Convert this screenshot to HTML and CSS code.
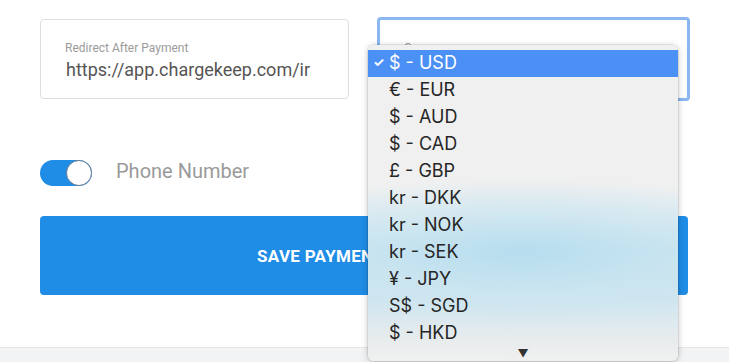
FILE: index.html
```html
<!DOCTYPE html>
<html lang="en">
<head>
    <meta charset="UTF-8">
    <meta name="viewport" content="width=device-width, initial-scale=1.0">
    <title>Payment Settings</title>
    <link rel="stylesheet" href="styles.css">
</head>
<body>
    <div class="page">
        <div class="form">
            <div class="field-row">
                <div class="field">
                    <label class="field-label">Redirect After Payment</label>
                    <div class="field-value">https://app.chargekeep.com/ir</div>
                </div>
                <div class="field field-focus">
                    <label class="field-label">Currency</label>
                    <div class="field-value"></div>
                </div>
            </div>

            <div class="toggle-row">
                <span class="toggle"><span class="knob"></span></span>
                <span class="toggle-label">Phone Number</span>
            </div>

            <button type="button" class="save-btn">SAVE PAYMENT SETTINGS</button>
        </div>
        <div class="footer"></div>
    </div>

    <!-- native select popup, drawn over the form -->
    <ul class="menu">
        <li class="selected"><span class="check">✓</span>$ - USD</li>
        <li>€ - EUR</li>
        <li>$ - AUD</li>
        <li>$ - CAD</li>
        <li>£ - GBP</li>
        <li>kr - DKK</li>
        <li>kr - NOK</li>
        <li>kr - SEK</li>
        <li>¥ - JPY</li>
        <li>S$ - SGD</li>
        <li>$ - HKD</li>
        <li class="more">▼</li>
    </ul>
</body>
</html>
```

FILE: styles.css
```css
* {
    box-sizing: border-box;
}

body {
    margin: 0;
    font-family: Roboto, "Helvetica Neue", Arial, sans-serif;
    background-color: white;
    overflow: hidden;
}

.page {
    height: 362px;
    display: flex;
    flex-direction: column;
}

.form {
    padding: 19px 41px 0 40px;
    height: 347px;
}

.field-row {
    display: grid;
    grid-template-columns: 1fr 1fr;
    gap: 30px;
}

.field {
    height: 80px;
    border: 1px solid #dedede;
    border-radius: 4px;
    padding: 21px 24px 0 24px;
    background-color: white;
    overflow: hidden;
}

.field-focus {
    border-color: #8ab6f2;
    box-shadow: 0 0 0 2px #8ab6f2;
    border-radius: 2px;
}

.field-label {
    display: block;
    font-size: 12px;
    color: #9b9b9b;
    line-height: 14px;
}

.field-value {
    font-size: 18px;
    color: #555;
    line-height: 26px;
    margin-top: 2px;
    white-space: nowrap;
    padding-left: 1px;
}

.toggle-row {
    display: flex;
    align-items: center;
    gap: 24px;
    margin-top: 61px;
    height: 26px;
}

.toggle {
    width: 52px;
    height: 26px;
    border-radius: 13px;
    background-color: #1f8ce6;
    display: flex;
    justify-content: flex-end;
}

.knob {
    width: 26px;
    height: 26px;
    border-radius: 50%;
    background-color: white;
    border: 1px solid #6b7d92;
}

.toggle-label {
    font-size: 20px;
    color: #9a9a9a;
    margin-top: -5px;
}

.save-btn {
    display: block;
    width: 100%;
    height: 79px;
    margin-top: 30px;
    border: none;
    border-radius: 4px;
    background-color: #1f8ce6;
    color: white;
    font-family: Roboto, Arial, sans-serif;
    font-size: 17px;
    font-weight: 700;
    letter-spacing: 0.3px;
}

.footer {
    flex: 1;
    background-color: #f2f3f5;
    border-top: 1px solid #e6e6e6;
}

.menu {
    position: absolute;
    left: 368px;
    top: 45px;
    width: 310px;
    height: 316px;
    margin: 0;
    padding: 5px 0 0 0;
    list-style: none;
    border-radius: 6px;
    background:
        radial-gradient(ellipse 280px 75px at 50% 207px, rgba(180, 220, 238, 0.85), rgba(200, 228, 240, 0.5) 55%, rgba(240, 240, 240, 0) 100%),
        linear-gradient(#f0f0f0 0, #f0f0f0 140px, #dcebf1 175px, #c8e4f0 205px, #d0e6f0 255px, #e8eced 295px, #f0f0f0 316px);
    box-shadow: 0 1px 6px rgba(0, 0, 0, 0.25), 0 0 0 0.5px rgba(0, 0, 0, 0.12);
    font-family: Inter, Roboto, Arial, sans-serif;
    font-size: 18px;
    color: #262626;
}

.menu li {
    height: 27px;
    line-height: 25px;
    padding-left: 21px;
    position: relative;
}

.menu li.selected {
    background-color: #4b91f5;
    color: white;
}

.check {
    position: absolute;
    left: 5px;
    font-size: 13px;
    font-weight: 700;
}

.menu li.more {
    height: 14px;
    line-height: 12px;
    padding-left: 0;
    text-align: center;
    font-size: 11px;
    color: #333;
}
```
